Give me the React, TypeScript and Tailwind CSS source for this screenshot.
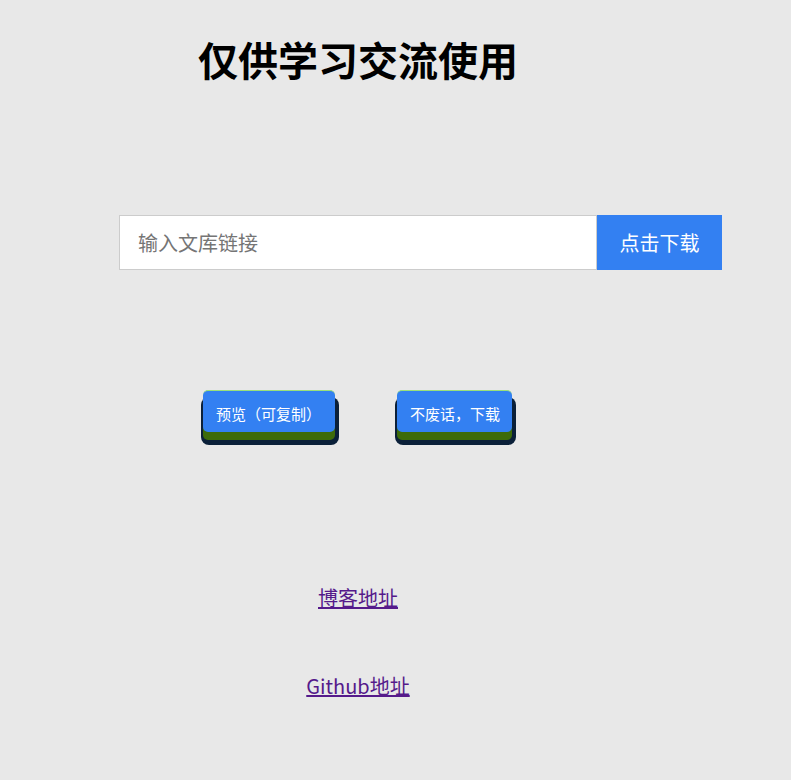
export default function App() {
  return (
    <div
      className="min-h-screen bg-[#e8e8e8] text-black"
      style={{ fontFamily: '"Noto Sans CJK SC", "Noto Sans", sans-serif' }}
    >
      {/* title */}
      <div className="w-[716px] pt-[35px]">
        <h1 className="text-center text-[40px] leading-[48px] font-bold">仅供学习交流使用</h1>
      </div>

      {/* search row */}
      <div className="mt-[132px] ml-[119px] flex h-[55px]">
        <input
          type="text"
          placeholder="输入文库链接"
          className="h-[55px] w-[478px] border border-[#cccccc] bg-white pl-[18px] text-[20px] text-black outline-none placeholder:text-[#757575]"
        />
        <button className="h-[55px] w-[125px] bg-[#3380f2] text-[20px] text-white">点击下载</button>
      </div>

      {/* action buttons */}
      <div className="mt-[120px] ml-[203px] flex gap-[62px]">
        <button className="h-[42px] w-[132px] rounded-[5px] border-t border-[#9be07a] bg-[#3380f2] pt-[5px] pl-[13px] text-left text-[15px] whitespace-nowrap text-white shadow-[0_8px_0_#3d6b09,1px_10px_0_3px_#0b2039]">
          预览（可复制）
        </button>
        <button className="h-[42px] w-[115px] rounded-[5px] border-t border-[#9be07a] bg-[#3380f2] pt-[5px] pl-[13px] text-left text-[15px] whitespace-nowrap text-white shadow-[0_8px_0_#3d6b09,1px_10px_0_3px_#0b2039]">
          不废话，下载
        </button>
      </div>

      {/* links */}
      <div className="mt-[151px] flex w-[716px] flex-col items-center gap-[58px] pb-[60px]">
        <a href="#" className="text-[20px] leading-[30px] text-[#551a8b] underline">
          博客地址
        </a>
        <a href="#" className="text-[20px] leading-[30px] text-[#551a8b] underline">
          Github地址
        </a>
      </div>
    </div>
  );
}
